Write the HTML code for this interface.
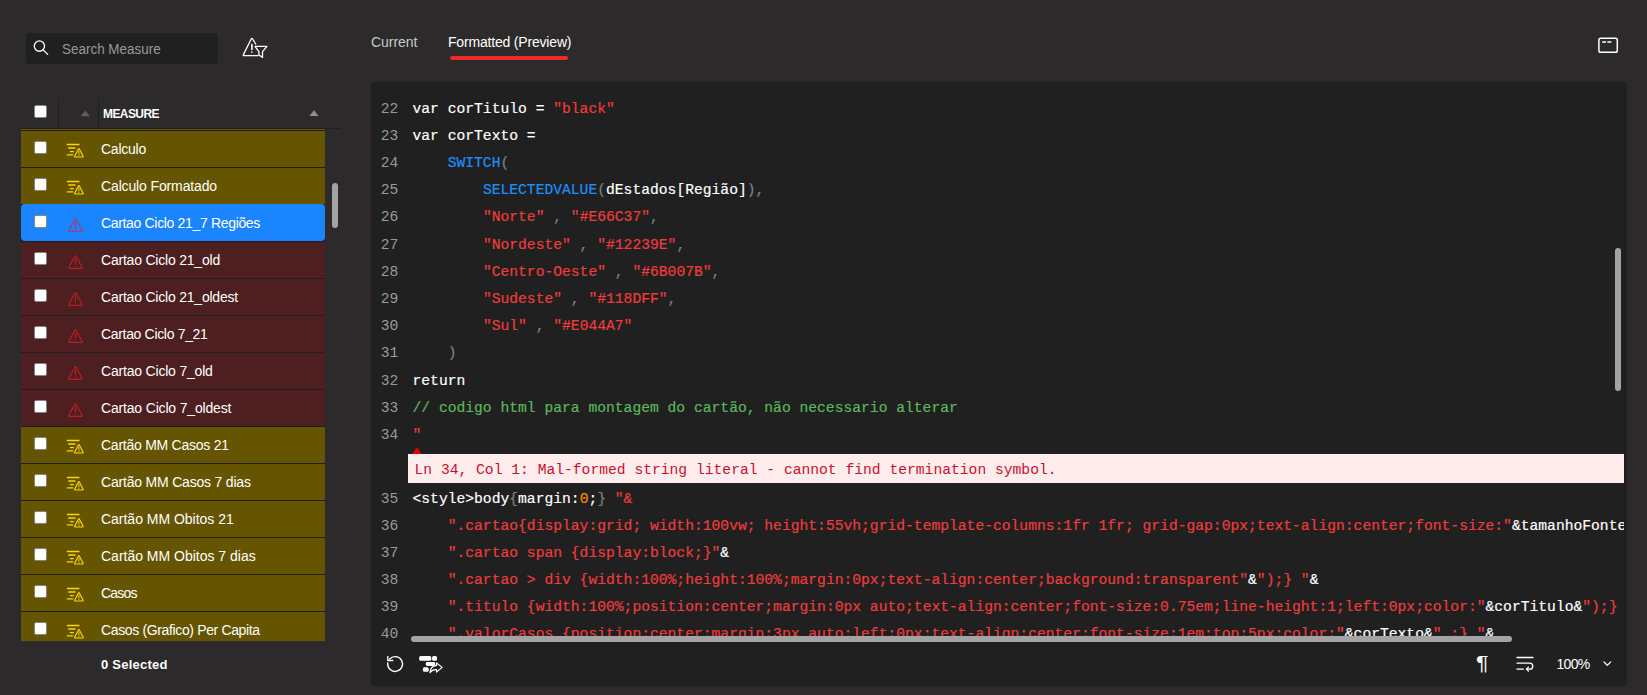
<!DOCTYPE html><html lang="pt"><head><meta charset="utf-8"><title>Measures</title><style>
*{box-sizing:border-box;margin:0;padding:0}
html,body{width:1647px;height:695px;overflow:hidden;background:#2c2a2b}
body{position:relative;font-family:"Liberation Sans",sans-serif;color:#fff}
.abs{position:absolute}
.t{position:absolute;white-space:pre;line-height:1}
#search{left:26px;top:33px;width:192px;height:31px;background:#202020;border-radius:4px}
#editor{left:371px;top:82px;width:1256px;height:604px;background:#202020;border-radius:4px;overflow:hidden}
#list{left:21px;top:129px;width:304px;height:512px;overflow:hidden;background:#201e20}
.row{position:absolute;left:0;width:304px;height:36px}
.row.y{background:#665500}
.row.r{background:#4d1f20}
.row.b{background:#1a85ff;border-radius:4px;height:37px}
.cb{position:absolute;left:13px;top:10px;width:13px;height:13px;background:#fff;border:1px solid #858585;border-radius:2px}
.rt{position:absolute;left:80px;top:11px;font-size:14px;line-height:14px;white-space:pre;color:#fff}
.ic{position:absolute;left:45px;width:19px;height:16px}
#code{position:absolute;left:0;top:0;width:1253px;height:560px;overflow:hidden;font-family:"Liberation Mono",monospace;font-size:14.66px;color:#fff;-webkit-text-stroke:0.18px}
.ln{position:absolute;left:0;height:27px;line-height:27px;white-space:pre}
.ln .n{position:absolute;left:9.8px;color:#9a9a9a;-webkit-text-stroke:0}
.ln .c{position:absolute;left:41.5px}
.k{color:#1e8fff} .s{color:#f03c3c} .p{color:#808080} .g{color:#5cb85c} .o{color:#ff8c00}
</style></head><body>
<div id="search" class="abs"></div>
<svg class="abs" style="left:32px;top:39px" width="18" height="18" viewBox="0 0 18 18" fill="none" stroke="#fff" stroke-width="1.3" stroke-linecap="round"><circle cx="7.4" cy="7.1" r="5.15"/><path d="M11.2 10.9L15.7 15.4"/></svg>
<div class="t" style="left:61.5px;top:40px;font-size:15.5px;line-height:18px;color:#989898;transform:scaleX(0.8679);transform-origin:0 0">Search Measure</div>
<svg class="abs" style="left:240px;top:36px" width="30" height="24" viewBox="0 0 30 24" fill="none" stroke="#fff" stroke-width="1.3" stroke-linecap="round" stroke-linejoin="round"><path d="M15.7 8.0L12.6 3.0Q11.9 2.0 11.2 3.0L3.4 18.6Q2.9 19.6 4.0 19.6H18.2"/><path d="M11.9 8.6V13.5M11.9 16V16.1" stroke-width="1.6"/><path d="M15.0 10.4H26.9L22.5 15.7V21.4L18.9 19V15.7Z" fill="#2c2a2b"/></svg>
<div class="abs" style="left:34px;top:104.5px;width:13px;height:13.5px;background:#fff;border:1px solid #858585;border-radius:2px"></div>
<div class="abs" style="left:58px;top:99px;width:1px;height:29px;background:#1f1e21"></div>
<div class="abs" style="left:98px;top:99px;width:1px;height:29px;background:#1f1e21"></div>
<div class="abs" style="left:21px;top:128px;width:320px;height:1px;background:#1f1e21"></div>
<svg class="abs" style="left:80px;top:110px" width="11" height="7" viewBox="0 0 11 7"><path d="M5.3 0.6L9.8 6.2H0.8Z" fill="#5e5e5e"/></svg>
<svg class="abs" style="left:308px;top:110px" width="12" height="7" viewBox="0 0 12 7"><path d="M6 0.3L10.6 6.1H1.4Z" fill="#8e8e8e"/></svg>
<div class="t" style="left:103px;top:108px;font-size:12px;line-height:13px;font-weight:700;letter-spacing:-0.574px">MEASURE</div>
<div id="list" class="abs">
<div class="abs" style="left:0;top:0;width:304px;height:1px;background:#665500"></div>
<div class="row y" style="top:2px"><div class="cb" style="top:10px"></div><svg class="ic" style="top:12px" viewBox="0 0 19 16" fill="none" stroke="#ffd500" stroke-width="1.35" stroke-linecap="round" stroke-linejoin="round"><path d="M1.4 1.5H12.9M2.7 5H9M4.4 8.6H7.3M1.4 11.9H6.7"/><path d="M13.32 6.00Q12.90 5.20 12.48 5.99L8.62 13.21Q8.20 14.00 9.10 14.00L16.60 14.00Q17.50 14.00 17.08 13.20Z" stroke-width="1.15"/><path d="M12.9 8.3V11M12.9 12.4V12.5" stroke-width="1.0"/></svg><div class="rt" style="top:11px;letter-spacing:-0.243px">Calculo</div></div>
<div class="row y" style="top:39px"><div class="cb" style="top:10px"></div><svg class="ic" style="top:12px" viewBox="0 0 19 16" fill="none" stroke="#ffd500" stroke-width="1.35" stroke-linecap="round" stroke-linejoin="round"><path d="M1.4 1.5H12.9M2.7 5H9M4.4 8.6H7.3M1.4 11.9H6.7"/><path d="M13.32 6.00Q12.90 5.20 12.48 5.99L8.62 13.21Q8.20 14.00 9.10 14.00L16.60 14.00Q17.50 14.00 17.08 13.20Z" stroke-width="1.15"/><path d="M12.9 8.3V11M12.9 12.4V12.5" stroke-width="1.0"/></svg><div class="rt" style="top:11px;letter-spacing:-0.134px">Calculo Formatado</div></div>
<div class="row b" style="top:75px"><div class="cb" style="top:11px"></div><svg class="ic" style="top:13px" viewBox="0 0 19 16" fill="none" stroke="#a93a72" stroke-width="1.25" stroke-linecap="round" stroke-linejoin="round"><path d="M10.22 2.50Q9.45 1.10 8.68 2.50L2.97 13.00Q2.20 14.40 3.80 14.40L15.10 14.40Q16.70 14.40 15.93 13.00Z"/><path d="M9.45 5.2V10M9.45 11.9V12.1"/></svg><div class="rt" style="top:12px;letter-spacing:-0.333px">Cartao Ciclo 21_7 Regiões</div></div>
<div class="row r" style="top:113px"><div class="cb" style="top:10px"></div><svg class="ic" style="top:12px" viewBox="0 0 19 16" fill="none" stroke="#bf1c24" stroke-width="1.25" stroke-linecap="round" stroke-linejoin="round"><path d="M10.22 2.50Q9.45 1.10 8.68 2.50L2.97 13.00Q2.20 14.40 3.80 14.40L15.10 14.40Q16.70 14.40 15.93 13.00Z"/><path d="M9.45 5.2V10M9.45 11.9V12.1"/></svg><div class="rt" style="top:11px;letter-spacing:-0.209px">Cartao Ciclo 21_old</div></div>
<div class="row r" style="top:150px"><div class="cb" style="top:10px"></div><svg class="ic" style="top:12px" viewBox="0 0 19 16" fill="none" stroke="#bf1c24" stroke-width="1.25" stroke-linecap="round" stroke-linejoin="round"><path d="M10.22 2.50Q9.45 1.10 8.68 2.50L2.97 13.00Q2.20 14.40 3.80 14.40L15.10 14.40Q16.70 14.40 15.93 13.00Z"/><path d="M9.45 5.2V10M9.45 11.9V12.1"/></svg><div class="rt" style="top:11px;letter-spacing:-0.211px">Cartao Ciclo 21_oldest</div></div>
<div class="row r" style="top:187px"><div class="cb" style="top:10px"></div><svg class="ic" style="top:12px" viewBox="0 0 19 16" fill="none" stroke="#bf1c24" stroke-width="1.25" stroke-linecap="round" stroke-linejoin="round"><path d="M10.22 2.50Q9.45 1.10 8.68 2.50L2.97 13.00Q2.20 14.40 3.80 14.40L15.10 14.40Q16.70 14.40 15.93 13.00Z"/><path d="M9.45 5.2V10M9.45 11.9V12.1"/></svg><div class="rt" style="top:11px;letter-spacing:-0.327px">Cartao Ciclo 7_21</div></div>
<div class="row r" style="top:224px"><div class="cb" style="top:10px"></div><svg class="ic" style="top:12px" viewBox="0 0 19 16" fill="none" stroke="#bf1c24" stroke-width="1.25" stroke-linecap="round" stroke-linejoin="round"><path d="M10.22 2.50Q9.45 1.10 8.68 2.50L2.97 13.00Q2.20 14.40 3.80 14.40L15.10 14.40Q16.70 14.40 15.93 13.00Z"/><path d="M9.45 5.2V10M9.45 11.9V12.1"/></svg><div class="rt" style="top:11px;letter-spacing:-0.193px">Cartao Ciclo 7_old</div></div>
<div class="row r" style="top:261px"><div class="cb" style="top:10px"></div><svg class="ic" style="top:12px" viewBox="0 0 19 16" fill="none" stroke="#bf1c24" stroke-width="1.25" stroke-linecap="round" stroke-linejoin="round"><path d="M10.22 2.50Q9.45 1.10 8.68 2.50L2.97 13.00Q2.20 14.40 3.80 14.40L15.10 14.40Q16.70 14.40 15.93 13.00Z"/><path d="M9.45 5.2V10M9.45 11.9V12.1"/></svg><div class="rt" style="top:11px;letter-spacing:-0.174px">Cartao Ciclo 7_oldest</div></div>
<div class="row y" style="top:298px"><div class="cb" style="top:10px"></div><svg class="ic" style="top:12px" viewBox="0 0 19 16" fill="none" stroke="#ffd500" stroke-width="1.35" stroke-linecap="round" stroke-linejoin="round"><path d="M1.4 1.5H12.9M2.7 5H9M4.4 8.6H7.3M1.4 11.9H6.7"/><path d="M13.32 6.00Q12.90 5.20 12.48 5.99L8.62 13.21Q8.20 14.00 9.10 14.00L16.60 14.00Q17.50 14.00 17.08 13.20Z" stroke-width="1.15"/><path d="M12.9 8.3V11M12.9 12.4V12.5" stroke-width="1.0"/></svg><div class="rt" style="top:11px;letter-spacing:-0.254px">Cartão MM Casos 21</div></div>
<div class="row y" style="top:335px"><div class="cb" style="top:10px"></div><svg class="ic" style="top:12px" viewBox="0 0 19 16" fill="none" stroke="#ffd500" stroke-width="1.35" stroke-linecap="round" stroke-linejoin="round"><path d="M1.4 1.5H12.9M2.7 5H9M4.4 8.6H7.3M1.4 11.9H6.7"/><path d="M13.32 6.00Q12.90 5.20 12.48 5.99L8.62 13.21Q8.20 14.00 9.10 14.00L16.60 14.00Q17.50 14.00 17.08 13.20Z" stroke-width="1.15"/><path d="M12.9 8.3V11M12.9 12.4V12.5" stroke-width="1.0"/></svg><div class="rt" style="top:11px;letter-spacing:-0.198px">Cartão MM Casos 7 dias</div></div>
<div class="row y" style="top:372px"><div class="cb" style="top:10px"></div><svg class="ic" style="top:12px" viewBox="0 0 19 16" fill="none" stroke="#ffd500" stroke-width="1.35" stroke-linecap="round" stroke-linejoin="round"><path d="M1.4 1.5H12.9M2.7 5H9M4.4 8.6H7.3M1.4 11.9H6.7"/><path d="M13.32 6.00Q12.90 5.20 12.48 5.99L8.62 13.21Q8.20 14.00 9.10 14.00L16.60 14.00Q17.50 14.00 17.08 13.20Z" stroke-width="1.15"/><path d="M12.9 8.3V11M12.9 12.4V12.5" stroke-width="1.0"/></svg><div class="rt" style="top:11px;letter-spacing:-0.019px">Cartão MM Obitos 21</div></div>
<div class="row y" style="top:409px"><div class="cb" style="top:10px"></div><svg class="ic" style="top:12px" viewBox="0 0 19 16" fill="none" stroke="#ffd500" stroke-width="1.35" stroke-linecap="round" stroke-linejoin="round"><path d="M1.4 1.5H12.9M2.7 5H9M4.4 8.6H7.3M1.4 11.9H6.7"/><path d="M13.32 6.00Q12.90 5.20 12.48 5.99L8.62 13.21Q8.20 14.00 9.10 14.00L16.60 14.00Q17.50 14.00 17.08 13.20Z" stroke-width="1.15"/><path d="M12.9 8.3V11M12.9 12.4V12.5" stroke-width="1.0"/></svg><div class="rt" style="top:11px;letter-spacing:-0.006px">Cartão MM Obitos 7 dias</div></div>
<div class="row y" style="top:446px"><div class="cb" style="top:10px"></div><svg class="ic" style="top:12px" viewBox="0 0 19 16" fill="none" stroke="#ffd500" stroke-width="1.35" stroke-linecap="round" stroke-linejoin="round"><path d="M1.4 1.5H12.9M2.7 5H9M4.4 8.6H7.3M1.4 11.9H6.7"/><path d="M13.32 6.00Q12.90 5.20 12.48 5.99L8.62 13.21Q8.20 14.00 9.10 14.00L16.60 14.00Q17.50 14.00 17.08 13.20Z" stroke-width="1.15"/><path d="M12.9 8.3V11M12.9 12.4V12.5" stroke-width="1.0"/></svg><div class="rt" style="top:11px;letter-spacing:-0.778px">Casos</div></div>
<div class="row y" style="top:483px"><div class="cb" style="top:10px"></div><svg class="ic" style="top:12px" viewBox="0 0 19 16" fill="none" stroke="#ffd500" stroke-width="1.35" stroke-linecap="round" stroke-linejoin="round"><path d="M1.4 1.5H12.9M2.7 5H9M4.4 8.6H7.3M1.4 11.9H6.7"/><path d="M13.32 6.00Q12.90 5.20 12.48 5.99L8.62 13.21Q8.20 14.00 9.10 14.00L16.60 14.00Q17.50 14.00 17.08 13.20Z" stroke-width="1.15"/><path d="M12.9 8.3V11M12.9 12.4V12.5" stroke-width="1.0"/></svg><div class="rt" style="top:11px;letter-spacing:-0.360px">Casos (Grafico) Per Capita</div></div>
</div>
<div class="abs" style="left:332px;top:183px;width:6px;height:45px;border-radius:3px;background:#a3a3a3"></div>
<div class="t" style="left:101px;top:657.6px;font-size:13px;line-height:14px;font-weight:700;letter-spacing:0.247px">0 Selected</div>
<div class="t" style="left:371px;top:35px;font-size:14px;line-height:15px;color:#c8c8c8;letter-spacing:-0.041px">Current</div>
<div class="t" style="left:448px;top:35px;font-size:14px;line-height:15px;letter-spacing:-0.185px">Formatted (Preview)</div>
<div class="abs" style="left:450px;top:56px;width:118px;height:4px;border-radius:2px;background:#ef2828"></div>
<svg class="abs" style="left:1596px;top:35px" width="24" height="20" viewBox="0 0 24 20" fill="none" stroke="#fff"><rect x="2.9" y="3.2" width="18.4" height="14" rx="1.8" stroke-width="1.5"/><path d="M6.2 7H10M11.3 7H15.3" stroke-width="1.3"/></svg>
<div id="editor" class="abs"><div id="code">
<div class="ln" style="top:14.20px"><span class="n">22</span><span class="c">var corTitulo = <span class="s">&quot;black&quot;</span></span></div>
<div class="ln" style="top:41.20px"><span class="n">23</span><span class="c">var corTexto =</span></div>
<div class="ln" style="top:68.20px"><span class="n">24</span><span class="c">    <span class="k">SWITCH</span><span class="p">(</span></span></div>
<div class="ln" style="top:95.20px"><span class="n">25</span><span class="c">        <span class="k">SELECTEDVALUE</span><span class="p">(</span>dEstados[Região]<span class="p">),</span></span></div>
<div class="ln" style="top:122.20px"><span class="n">26</span><span class="c">        <span class="s">&quot;Norte&quot;</span><span class="p"> , </span><span class="s">&quot;#E66C37&quot;</span><span class="p">,</span></span></div>
<div class="ln" style="top:150.20px"><span class="n">27</span><span class="c">        <span class="s">&quot;Nordeste&quot;</span><span class="p"> , </span><span class="s">&quot;#12239E&quot;</span><span class="p">,</span></span></div>
<div class="ln" style="top:177.20px"><span class="n">28</span><span class="c">        <span class="s">&quot;Centro-Oeste&quot;</span><span class="p"> , </span><span class="s">&quot;#6B007B&quot;</span><span class="p">,</span></span></div>
<div class="ln" style="top:204.20px"><span class="n">29</span><span class="c">        <span class="s">&quot;Sudeste&quot;</span><span class="p"> , </span><span class="s">&quot;#118DFF&quot;</span><span class="p">,</span></span></div>
<div class="ln" style="top:231.20px"><span class="n">30</span><span class="c">        <span class="s">&quot;Sul&quot;</span><span class="p"> , </span><span class="s">&quot;#E044A7&quot;</span></span></div>
<div class="ln" style="top:258.20px"><span class="n">31</span><span class="c">    <span class="p">)</span></span></div>
<div class="ln" style="top:286.20px"><span class="n">32</span><span class="c">return</span></div>
<div class="ln" style="top:313.20px"><span class="n">33</span><span class="c"><span class="g">// codigo html para montagem do cartão, não necessario alterar</span></span></div>
<div class="ln" style="top:340.20px"><span class="n">34</span><span class="c"><span class="s">&quot;</span></span></div>
<div class="ln" style="top:404.20px"><span class="n">35</span><span class="c">&lt;style&gt;body<span class="p">{</span>margin:<span class="o">0</span>;<span class="p">}</span><span class="s"> &quot;&amp;</span></span></div>
<div class="ln" style="top:431.20px"><span class="n">36</span><span class="c">    <span class="s">&quot;.cartao{display:grid; width:100vw; height:55vh;grid-template-columns:1fr 1fr; grid-gap:0px;text-align:center;font-size:&quot;</span>&amp;tamanhoFonte&amp;&quot;px;</span></div>
<div class="ln" style="top:458.20px"><span class="n">37</span><span class="c">    <span class="s">&quot;.cartao span {display:block;}&quot;</span>&amp;</span></div>
<div class="ln" style="top:485.20px"><span class="n">38</span><span class="c">    <span class="s">&quot;.cartao &gt; div {width:100%;height:100%;margin:0px;text-align:center;background:transparent&quot;</span>&amp;<span class="s">&quot;);} &quot;</span>&amp;</span></div>
<div class="ln" style="top:512.20px"><span class="n">39</span><span class="c">    <span class="s">&quot;.titulo {width:100%;position:center;margin:0px auto;text-align:center;font-size:0.75em;line-height:1;left:0px;color:&quot;</span>&amp;corTitulo&amp;<span class="s">&quot;);}</span></span></div>
<div class="ln" style="top:539.20px"><span class="n">40</span><span class="c">    <span class="s">&quot;.valorCasos {position:center;margin:3px auto;left:0px;text-align:center;font-size:1em;top:5px;color:&quot;</span>&amp;corTexto&amp;<span class="s">&quot; ;} &quot;</span>&amp;</span></div>
<svg class="abs" style="left:41px;top:365px" width="10" height="7" viewBox="0 0 10 7"><path d="M5 0L9.6 7H0.4Z" fill="#e00000"/></svg>
<div class="abs" style="left:37px;top:372px;width:1216px;height:29px;background:#ffecec"></div>
<div class="abs" style="left:43.5px;top:373.5px;height:29px;line-height:29px;white-space:pre;color:#c8102e;-webkit-text-stroke:0">Ln 34, Col 1: Mal-formed string literal - cannot find termination symbol.</div>
</div>
<div class="abs" style="left:40px;top:554px;width:1101px;height:6px;border-radius:3px;background:#a3a3a3"></div>
<div class="abs" style="left:1244px;top:166px;width:6px;height:143px;border-radius:3px;background:#a3a3a3"></div>
<svg class="abs" style="left:13px;top:571px" width="22" height="22" viewBox="0 0 22 22" fill="none" stroke="#fff" stroke-width="1.35" stroke-linecap="round" stroke-linejoin="round"><path d="M3.8 3.4V7.5H8.8"/><path d="M5.7 5.97A7.4 7.4 0 1 1 3.79 9.84"/></svg>
<svg class="abs" style="left:46px;top:571px" width="28" height="22" viewBox="0 0 28 22" fill="#fff" stroke="none"><rect x="2.2" y="3" width="12.1" height="4.8" rx="1.6"/><rect x="15.1" y="3" width="4.9" height="4.8" rx="1.6"/><rect x="8.8" y="9" width="9.5" height="4" rx="1.4"/><rect x="5.9" y="14.2" width="5.8" height="4.6" rx="1.6"/><path d="M19.6 9.9L25.1 14.4L19.6 19.1V16.6C16.8 16.4 14.6 17.4 12.9 19.6C13.3 15.6 15.8 12.8 19.6 12.4Z" fill="#202020" stroke="#fff" stroke-width="1.2" stroke-linejoin="round"/></svg>
<div class="t" style="left:1105px;top:569.5px;font-size:20px;line-height:23px;transform:scaleX(1.17);transform-origin:0 0">¶</div>
<svg class="abs" style="left:1144px;top:572px" width="20" height="20" viewBox="0 0 20 20" fill="none" stroke="#fff" stroke-width="1.3" stroke-linecap="round" stroke-linejoin="round"><path d="M2 3.5H18"/><path d="M2 9.2H14.8A2.9 2.9 0 0 1 14.8 15.1H11.6"/><path d="M2 15.1H8.4"/><path d="M13.4 13.2L11.4 15.1L13.4 17"/></svg>
<div class="t" style="left:1185.5px;top:574.5px;font-size:14px;line-height:15px;letter-spacing:-0.703px;font-family:'Liberation Sans',sans-serif">100%</div>
<svg class="abs" style="left:1231px;top:578px" width="12" height="8" viewBox="0 0 12 8" fill="none" stroke="#fff" stroke-width="1.2" stroke-linecap="round" stroke-linejoin="round"><path d="M1.8 1.9L5.3 5.3L8.8 1.9"/></svg>
</div>
</body></html>
